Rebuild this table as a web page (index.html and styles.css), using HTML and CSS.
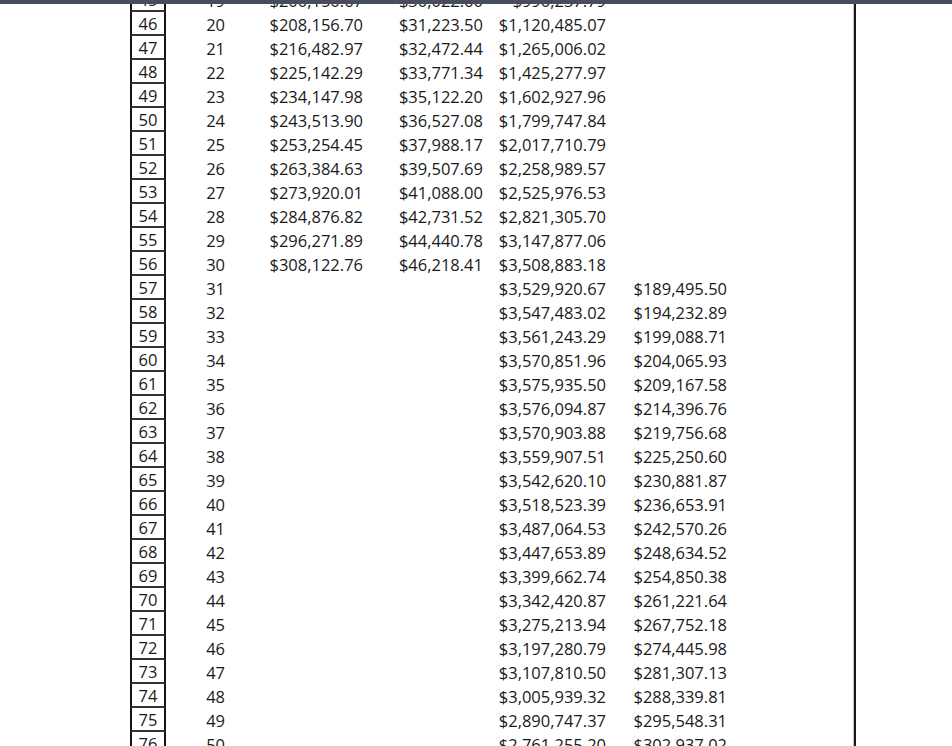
FILE: index.html
```html
<!DOCTYPE html>
<html>
<head>
<meta charset="utf-8">
<link rel="stylesheet" href="styles.css">
</head>
<body>
<div class="topbar"></div>
<div class="viewport">
<div class="sheet">
<div class="row"><div class="rn">45</div><div class="c">19</div><div class="c">$200,150.67</div><div class="c">$30,022.60</div><div class="c">$990,237.79</div><div class="c"></div><div></div></div>
<div class="row"><div class="rn">46</div><div class="c">20</div><div class="c">$208,156.70</div><div class="c">$31,223.50</div><div class="c">$1,120,485.07</div><div class="c"></div><div></div></div>
<div class="row"><div class="rn">47</div><div class="c">21</div><div class="c">$216,482.97</div><div class="c">$32,472.44</div><div class="c">$1,265,006.02</div><div class="c"></div><div></div></div>
<div class="row"><div class="rn">48</div><div class="c">22</div><div class="c">$225,142.29</div><div class="c">$33,771.34</div><div class="c">$1,425,277.97</div><div class="c"></div><div></div></div>
<div class="row"><div class="rn">49</div><div class="c">23</div><div class="c">$234,147.98</div><div class="c">$35,122.20</div><div class="c">$1,602,927.96</div><div class="c"></div><div></div></div>
<div class="row"><div class="rn">50</div><div class="c">24</div><div class="c">$243,513.90</div><div class="c">$36,527.08</div><div class="c">$1,799,747.84</div><div class="c"></div><div></div></div>
<div class="row"><div class="rn">51</div><div class="c">25</div><div class="c">$253,254.45</div><div class="c">$37,988.17</div><div class="c">$2,017,710.79</div><div class="c"></div><div></div></div>
<div class="row"><div class="rn">52</div><div class="c">26</div><div class="c">$263,384.63</div><div class="c">$39,507.69</div><div class="c">$2,258,989.57</div><div class="c"></div><div></div></div>
<div class="row"><div class="rn">53</div><div class="c">27</div><div class="c">$273,920.01</div><div class="c">$41,088.00</div><div class="c">$2,525,976.53</div><div class="c"></div><div></div></div>
<div class="row"><div class="rn">54</div><div class="c">28</div><div class="c">$284,876.82</div><div class="c">$42,731.52</div><div class="c">$2,821,305.70</div><div class="c"></div><div></div></div>
<div class="row"><div class="rn">55</div><div class="c">29</div><div class="c">$296,271.89</div><div class="c">$44,440.78</div><div class="c">$3,147,877.06</div><div class="c"></div><div></div></div>
<div class="row"><div class="rn">56</div><div class="c">30</div><div class="c">$308,122.76</div><div class="c">$46,218.41</div><div class="c">$3,508,883.18</div><div class="c"></div><div></div></div>
<div class="row"><div class="rn">57</div><div class="c">31</div><div class="c"></div><div class="c"></div><div class="c">$3,529,920.67</div><div class="c">$189,495.50</div><div></div></div>
<div class="row"><div class="rn">58</div><div class="c">32</div><div class="c"></div><div class="c"></div><div class="c">$3,547,483.02</div><div class="c">$194,232.89</div><div></div></div>
<div class="row"><div class="rn">59</div><div class="c">33</div><div class="c"></div><div class="c"></div><div class="c">$3,561,243.29</div><div class="c">$199,088.71</div><div></div></div>
<div class="row"><div class="rn">60</div><div class="c">34</div><div class="c"></div><div class="c"></div><div class="c">$3,570,851.96</div><div class="c">$204,065.93</div><div></div></div>
<div class="row"><div class="rn">61</div><div class="c">35</div><div class="c"></div><div class="c"></div><div class="c">$3,575,935.50</div><div class="c">$209,167.58</div><div></div></div>
<div class="row"><div class="rn">62</div><div class="c">36</div><div class="c"></div><div class="c"></div><div class="c">$3,576,094.87</div><div class="c">$214,396.76</div><div></div></div>
<div class="row"><div class="rn">63</div><div class="c">37</div><div class="c"></div><div class="c"></div><div class="c">$3,570,903.88</div><div class="c">$219,756.68</div><div></div></div>
<div class="row"><div class="rn">64</div><div class="c">38</div><div class="c"></div><div class="c"></div><div class="c">$3,559,907.51</div><div class="c">$225,250.60</div><div></div></div>
<div class="row"><div class="rn">65</div><div class="c">39</div><div class="c"></div><div class="c"></div><div class="c">$3,542,620.10</div><div class="c">$230,881.87</div><div></div></div>
<div class="row"><div class="rn">66</div><div class="c">40</div><div class="c"></div><div class="c"></div><div class="c">$3,518,523.39</div><div class="c">$236,653.91</div><div></div></div>
<div class="row"><div class="rn">67</div><div class="c">41</div><div class="c"></div><div class="c"></div><div class="c">$3,487,064.53</div><div class="c">$242,570.26</div><div></div></div>
<div class="row"><div class="rn">68</div><div class="c">42</div><div class="c"></div><div class="c"></div><div class="c">$3,447,653.89</div><div class="c">$248,634.52</div><div></div></div>
<div class="row"><div class="rn">69</div><div class="c">43</div><div class="c"></div><div class="c"></div><div class="c">$3,399,662.74</div><div class="c">$254,850.38</div><div></div></div>
<div class="row"><div class="rn">70</div><div class="c">44</div><div class="c"></div><div class="c"></div><div class="c">$3,342,420.87</div><div class="c">$261,221.64</div><div></div></div>
<div class="row"><div class="rn">71</div><div class="c">45</div><div class="c"></div><div class="c"></div><div class="c">$3,275,213.94</div><div class="c">$267,752.18</div><div></div></div>
<div class="row"><div class="rn">72</div><div class="c">46</div><div class="c"></div><div class="c"></div><div class="c">$3,197,280.79</div><div class="c">$274,445.98</div><div></div></div>
<div class="row"><div class="rn">73</div><div class="c">47</div><div class="c"></div><div class="c"></div><div class="c">$3,107,810.50</div><div class="c">$281,307.13</div><div></div></div>
<div class="row"><div class="rn">74</div><div class="c">48</div><div class="c"></div><div class="c"></div><div class="c">$3,005,939.32</div><div class="c">$288,339.81</div><div></div></div>
<div class="row"><div class="rn">75</div><div class="c">49</div><div class="c"></div><div class="c"></div><div class="c">$2,890,747.37</div><div class="c">$295,548.31</div><div></div></div>
<div class="row"><div class="rn">76</div><div class="c">50</div><div class="c"></div><div class="c"></div><div class="c">$2,761,255.20</div><div class="c">$302,937.02</div><div></div></div>
</div>
</div>
</body>
</html>
```
FILE: styles.css
```css
html, body {
  margin: 0;
  padding: 0;
  background: #ffffff;
}
body {
  font-family: "Open Sans", "Noto Sans", sans-serif;
  font-size: 16.5px;
  font-weight: 500;
  color: #1a1a1a;
  overflow: hidden;
}
.topbar {
  height: 4px;
  background: #474d5a;
}
.viewport {
  height: 742px;
  overflow: hidden;
}
.sheet {
  margin: -16px 0 0 130px;
  width: 726px;
  box-sizing: border-box;
  border-right: 2px solid #1a1a1a;
  box-shadow: inset -1px 0 0 #c4c4c4;
}
.row {
  display: grid;
  grid-template-columns: 36px 61px 138px 120px 123px 121px 1fr;
  height: 24px;
}
.rn {
  box-sizing: border-box;
  border-left: 2px solid #151515;
  border-right: 2px solid #151515;
  border-bottom: 2px solid #333333;
  display: flex;
  align-items: center;
  justify-content: center;
  line-height: 1;
  padding-top: 2px;
}
.c {
  display: flex;
  align-items: center;
  justify-content: flex-end;
  padding-right: 2px;
  padding-top: 2px;
  white-space: nowrap;
  line-height: 1;
}
```
